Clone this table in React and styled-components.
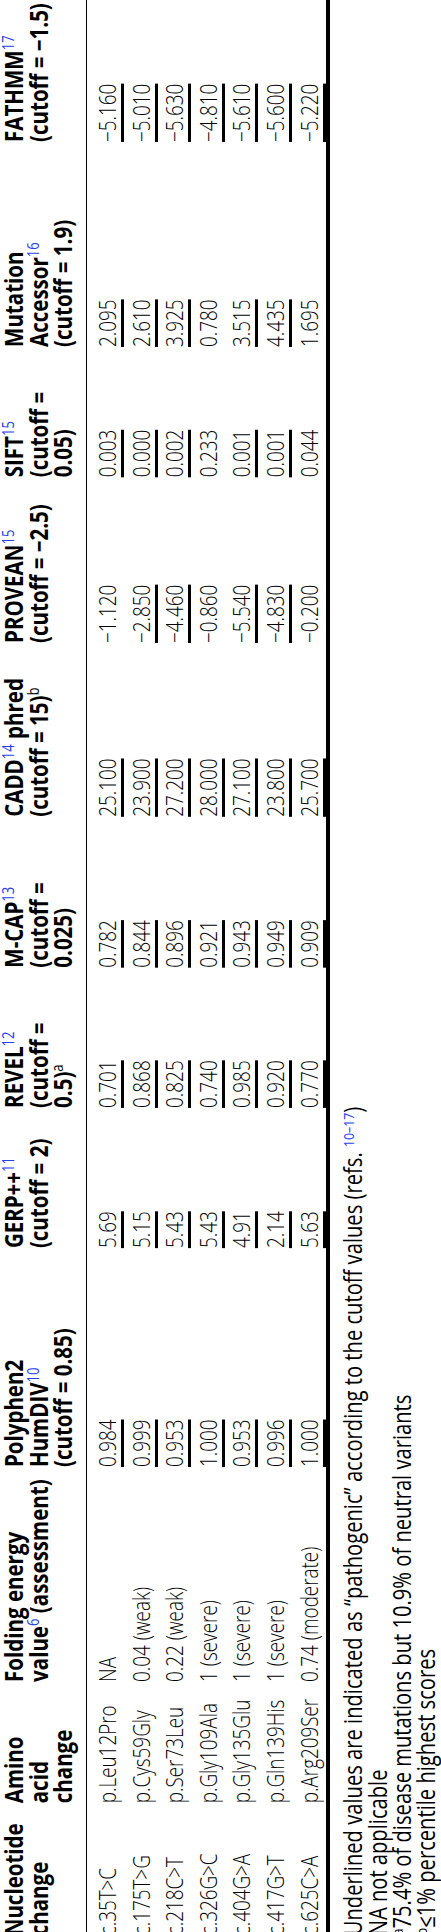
import React from "react";
import styled, { createGlobalStyle, css } from "styled-components";

const K = 0.82;
const PAGE_H = 1932;
const COLS = [161, 148, 262, 267, 171, 171, 184, 212, 202, 159, 250, 180];
const SHEET_W = COLS.reduce((a, b) => a + b, 0);
const TEMPLATE = COLS.map((c) => `${c}px`).join(" ");

const Global = createGlobalStyle`
  html, body { margin: 0; padding: 0; background: #fff; }
  body { font-family: "Open Sans", "Noto Sans", sans-serif; color: #000; }
`;

const Page = styled.div`
  width: 441px;
  height: ${PAGE_H}px;
  overflow: hidden;
  background: #fff;
`;

const Sheet = styled.div`
  width: ${SHEET_W}px;
  height: 441px;
  transform-origin: 0 0;
  transform: translateY(${PAGE_H}px) rotate(-90deg) scaleX(${K});
`;

const Content = styled.div`
  margin-left: -4px;
  display: flex;
  flex-direction: column;
`;

const HeadRow = styled.div`
  display: grid;
  grid-template-columns: ${TEMPLATE};
  height: 85px;
  padding-top: 1px;
  border-bottom: 1px solid #000;
  font-weight: 700;
  font-size: 25px;
  line-height: 24.5px;
`;

const HeadCell = styled.div`
  display: flex;
  flex-direction: column;
`;

const HeadLine = styled.div`
  white-space: nowrap;
`;

const Body = styled.div`
  padding-top: 4px;
  border-bottom: 4px solid #000;
`;

const Row = styled.div`
  display: grid;
  grid-template-columns: ${TEMPLATE};
  height: 33.6px;
  font-size: 23px;
  font-weight: 300;
  line-height: 33.6px;
`;

const Cell = styled.div`
  white-space: nowrap;
`;

const Val = styled.span`
  ${(p) =>
    p.$u &&
    css`
      text-decoration: underline;
      text-decoration-thickness: 3px;
      text-underline-offset: 5px;
    `}
`;

const Notes = styled.div`
  padding-top: 11px;
  font-size: 24.6px;
  line-height: 24.4px;
  font-weight: 400;
`;

const Note = styled.div`
  white-space: nowrap;
`;

const Sup = styled.sup`
  font-size: ${(p) => (p.$small ? 15 : 16)}px;
  font-weight: 400;
  line-height: 0;
  vertical-align: ${(p) => p.$raise || 9}px;
  color: ${(p) => (p.$blue ? "#2741e8" : "#000")};
`;

const headers = [
  ["Nucleotide", "change"],
  ["Amino", "acid", "change"],
  [
    "Folding energy",
    <>
      value<Sup $blue>6</Sup> (assessment)
    </>,
  ],
  [
    "Polyphen2",
    <>
      HumDIV<Sup $blue>10</Sup>
    </>,
    "(cutoff = 0.85)",
  ],
  [
    <>
      GERP++<Sup $blue>11</Sup>
    </>,
    "(cutoff = 2)",
  ],
  [
    <>
      REVEL<Sup $blue>12</Sup>
    </>,
    "(cutoff =",
    <>
      0.5)<Sup>a</Sup>
    </>,
  ],
  [
    <>
      M-CAP<Sup $blue>13</Sup>
    </>,
    "(cutoff =",
    "0.025)",
  ],
  [
    <>
      CADD<Sup $blue>14</Sup> phred
    </>,
    <>
      (cutoff = 15)<Sup>b</Sup>
    </>,
  ],
  [
    <>
      PROVEAN<Sup $blue>15</Sup>
    </>,
    "(cutoff = \u22122.5)",
  ],
  [
    <>
      SIFT<Sup $blue>15</Sup>
    </>,
    "(cutoff =",
    "0.05)",
  ],
  [
    "Mutation",
    <>
      Accessor<Sup $blue>16</Sup>
    </>,
    "(cutoff = 1.9)",
  ],
  [
    <>
      FATHMM<Sup $blue>17</Sup>
    </>,
    "(cutoff = \u22121.5)",
  ],
];

const M = "\u2212";
// "_" prefix marks an underlined (pathogenic) value
const rows = [
  ["c.35T>C", "p.Leu12Pro", "NA", "_0.984", "_5.69", "_0.701", "_0.782", "_25.100", `${M}1.120`, "_0.003", "_2.095", `_${M}5.160`],
  ["c.175T>G", "p.Cys59Gly", "0.04 (weak)", "_0.999", "_5.15", "_0.868", "_0.844", "_23.900", `_${M}2.850`, "_0.000", "_2.610", `_${M}5.010`],
  ["c.218C>T", "p.Ser73Leu", "0.22 (weak)", "_0.953", "_5.43", "_0.825", "_0.896", "_27.200", `_${M}4.460`, "_0.002", "_3.925", `_${M}5.630`],
  ["c.326G>C", "p.Gly109Ala", "1 (severe)", "_1.000", "_5.43", "_0.740", "_0.921", "_28.000", `${M}0.860`, "0.233", "0.780", `_${M}4.810`],
  ["c.404G>A", "p.Gly135Glu", "1 (severe)", "_0.953", "_4.91", "_0.985", "_0.943", "_27.100", `_${M}5.540`, "_0.001", "_3.515", `_${M}5.610`],
  ["c.417G>T", "p.Gln139His", "1 (severe)", "_0.996", "_2.14", "_0.920", "_0.949", "_23.800", `_${M}4.830`, "_0.001", "_4.435", `_${M}5.600`],
  ["c.625C>A", "p.Arg209Ser", "0.74 (moderate)", "_1.000", "_5.63", "_0.770", "_0.909", "_25.700", `${M}0.200`, "0.044", "1.695", `_${M}5.220`],
];

export default function App() {
  return (
    <>
      <Global />
      <Page>
        <Sheet>
          <Content>
            <HeadRow>
              {headers.map((lines, i) => (
                <HeadCell key={i}>
                  {lines.map((l, j) => (
                    <HeadLine key={j}>{l}</HeadLine>
                  ))}
                </HeadCell>
              ))}
            </HeadRow>
            <Body>
              {rows.map((r, i) => (
                <Row key={i}>
                  {r.map((v, j) => {
                    const u = v.startsWith("_");
                    return (
                      <Cell key={j}>
                        <Val $u={u}>{u ? v.slice(1) : v}</Val>
                      </Cell>
                    );
                  })}
                </Row>
              ))}
            </Body>
            <Notes>
              <Note>
                Underlined values are indicated as “pathogenic” according to the cutoff values (refs.{" "}
                <Sup $blue $small $raise={8}>
                  10–17
                </Sup>
                )
              </Note>
              <Note>NA not applicable</Note>
              <Note>
                <Sup $small $raise={8}>a</Sup>75.4% of disease mutations but 10.9% of neutral variants
              </Note>
              <Note>
                <Sup $small $raise={8}>b</Sup>≤1% percentile highest scores
              </Note>
            </Notes>
          </Content>
        </Sheet>
      </Page>
    </>
  );
}
